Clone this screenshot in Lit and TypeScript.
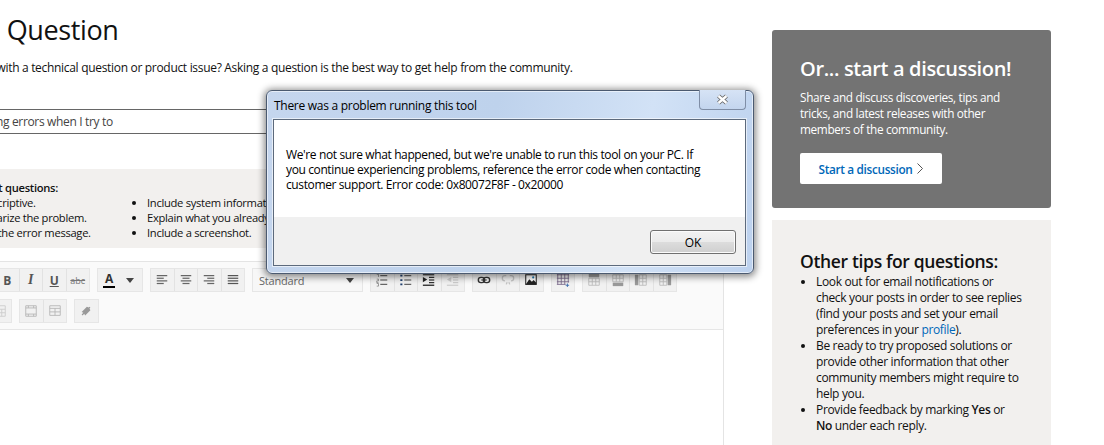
import { LitElement, html, css, svg, nothing } from 'lit';
import { customElement } from 'lit/decorators.js';

// toolbar glyphs, all on a 16x16 box
const lines = (rows: [number, number, number][], color = '#444') =>
  rows.map(([y, x1, x2]) => svg`<path d="M${x1} ${y}H${x2}" stroke=${color} stroke-width="1.4" />`);

const icons: Record<string, unknown> = {
  left: lines([[3, 2, 14], [6, 2, 10], [9, 2, 14], [12, 2, 10]], '#666'),
  center: lines([[3, 2, 14], [6, 4, 12], [9, 2, 14], [12, 4, 12]], '#666'),
  right: lines([[3, 2, 14], [6, 6, 14], [9, 2, 14], [12, 6, 14]], '#666'),
  justify: lines([[3, 2, 14], [6, 2, 14], [9, 2, 14], [12, 2, 14]], '#555'),
  ol: svg`${lines([[3, 6, 14], [8, 6, 14], [13, 6, 14]], '#666')}<path d="M2 1.500h2v3M2 7h2v2H2v2h2M2 12h2v3H2" fill="none" stroke="#777" stroke-width=".8" />`,
  ul: svg`${lines([[3, 6, 14], [8, 6, 14], [13, 6, 14]], '#666')}<path d="M1.500 2h2.400v2H1.500zM1.500 7h2.400v2H1.500zM1.500 12h2.400v2H1.500z" fill="#1f3f6e" />`,
  indent: svg`${lines([[2, 1, 14], [5, 8, 14], [8, 8, 14], [11, 8, 14]], '#333')}<path d="M1 4.500 6 7.500 1 10.500z" fill="#222" /><path d="M1 14H14" stroke="#333" stroke-width="1.600" />`,
  outdent: svg`${lines([[2, 1, 14], [5, 8, 14], [8, 8, 14], [11, 8, 14], [14, 1, 14]], '#ccc')}<path d="M6 4.500 1 7.500 6 10.500z" fill="#ccc" />`,
  link: svg`<rect x="1.500" y="5" width="7" height="6" rx="3" fill="none" stroke="#333" stroke-width="1.600" /><rect x="7.500" y="5" width="7" height="6" rx="3" fill="none" stroke="#333" stroke-width="1.600" /><path d="M5 8h6" stroke="#333" stroke-width="1.400" />`,
  unlink: svg`<path d="M6 3H4.500a3 3 0 0 0 0 6M10 3h1.500a3 3 0 0 1 0 6M6 13l1-2.500M10 13 9 10.500" fill="none" stroke="#c4c4c4" stroke-width="1.500" />`,
  image: svg`<rect x="2" y="2" width="12" height="11" fill="#fff" stroke="#222" stroke-width="1.200" /><path d="M2 13 6 7l3 3 2-2 3 3v2z" fill="#222" /><circle cx="10.500" cy="5" r="1.200" fill="#27a" />`,
  tableAdd: svg`<path d="M2 1v12M6 1v12M10 1v12M14 1v10M1 2h14M1 6h14M1 10h14M1 13h10" stroke="#7a6a8c" fill="none" /><path d="M13 12v4M11 14h4" stroke="#36a" />`,
  rowAbove: svg`<path d="M2 1h12v4H2z" fill="#999" /><path d="M2 6h12v8H2zM2 10h12M6 6v8M10 6v8" fill="none" stroke="#bbb" />`,
  rowBelow: svg`<path d="M2 11h12v4H2z" fill="#999" /><path d="M2 2h12v8H2zM2 6h12M6 2v8M10 2v8" fill="none" stroke="#bbb" />`,
  colLeft: svg`<path d="M1 2h4v12H1z" fill="#999" /><path d="M6 2h8v12H6zM10 2v12M6 6h8M6 10h8" fill="none" stroke="#bbb" />`,
  colRight: svg`<path d="M11 2h4v12h-4z" fill="#999" /><path d="M2 2h8v12H2zM6 2v12M2 6h8M2 10h8" fill="none" stroke="#bbb" />`,
  cells: svg`<path d="M2 2h12v12H2zM2 6h12M2 10h12M6 2v12M10 6v8" fill="none" stroke="#ccc" />`,
  merge: svg`<path d="M2 2h12v12H2zM2 4.500h12M2 11.500h12M5 2v2.500M11 2v2.500M5 11.500V14M11 11.500V14" fill="none" stroke="#b5b5b5" />`,
  split: svg`<path d="M2 2h12v11H2zM2 5h12M2 9h12M8 5v8" fill="none" stroke="#b5b5b5" />`,
  eraser: svg`<path d="M3 9 9 3l2 1 1-1 1 1-1 1 1 2-6 6-1-2-2 2-1-1 2-2z" fill="#999" />`,
};

type Btn = { label?: string; cls?: string; icon?: string };
const row1: Btn[][] = [
  [
    { label: 'B', cls: 'b' },
    { label: 'I', cls: 'i' },
    { label: 'U', cls: 'u' },
    { label: 'abc', cls: 'abc' },
  ],
];
const row1b: Btn[][] = [
  [{ icon: 'ol' }, { icon: 'ul' }, { icon: 'indent' }, { icon: 'outdent' }],
  [{ icon: 'link' }, { icon: 'unlink' }, { icon: 'image' }],
  [{ icon: 'tableAdd' }],
  [{ icon: 'rowAbove' }, { icon: 'rowBelow' }, { icon: 'colLeft' }, { icon: 'colRight' }],
];
const aligns: Btn[] = [{ icon: 'left' }, { icon: 'center' }, { icon: 'right' }, { icon: 'justify' }];
const row2: Btn[][] = [[{ icon: 'cells' }], [{ icon: 'merge' }, { icon: 'split' }], [{ icon: 'eraser' }]];

@customElement('app-root')
export class AppRoot extends LitElement {
  static styles = css`
    :host {
      display: flex;
      width: 1104px;
      height: 445px;
      overflow: hidden;
      position: relative;
      background: #fff;
      color: #111;
      font-family: 'Open Sans', 'Noto Sans', sans-serif;
      font-size: 12px;
      letter-spacing: -0.34px;
    }
    .main {
      flex: none;
      width: 804px;
      margin-left: -80px;
      height: 445px;
    }
    h1 {
      margin: 13px 0 0 0;
      font-size: 27px;
      font-weight: 400;
      line-height: 34px;
      letter-spacing: -0.4px;
      word-spacing: 5px;
      padding-left: 6px;
    }
    .intro {
      margin: 13px 0 0 19px;
      line-height: 16px;
      letter-spacing: -0.31px;
    }
    .input {
      margin: 33px 0 0 0;
      height: 23px;
      border-top: 1px solid #666;
      border-bottom: 1px solid #666;
      padding-left: 34px;
      line-height: 23px;
      color: #444;
    }
    .tips {
      margin-top: 35px;
      height: 79px;
      background: #f2f0ee;
      padding-top: 11px;
      box-sizing: border-box;
      font-size: 11.200px;
      letter-spacing: -0.3px;
      line-height: 15px;
      display: grid;
      grid-template-columns: 215px 1fr;
      align-content: start;
    }
    .tips b {
      grid-column: 1 / 3;
      font-weight: 600;
    }
    .tips ul {
      margin: 0;
      padding: 0 0 0 44px;
    }
    .tips ul + ul {
      padding-left: 12px;
    }
    .editor {
      margin-top: 13px;
      height: 185px;
      border-top: 1px solid #e4e4e4;
      border-right: 1px solid #e4e4e4;
      box-sizing: border-box;
    }
    .toolbar {
      height: 68px;
      padding-top: 6px;
      box-sizing: border-box;
      background: #fafafa;
      border-bottom: 1px solid #e6e6e6;
      display: flex;
      flex-direction: column;
      gap: 7px;
    }
    .row {
      display: flex;
      gap: 7px;
      height: 24px;
      flex: none;
    }
    .row.first {
      padding-left: 75px;
    }
    .row.second {
      padding-left: 67.500px;
    }
    .group {
      flex: none;
      display: flex;
      border: 1px solid #e6e6e6;
      background: #f1f1f1;
      box-sizing: border-box;
    }
    .btn {
      width: 22.500px;
      height: 22px;
      flex: none;
      display: flex;
      align-items: center;
      justify-content: center;
      border-left: 1px solid #e2e2e2;
      color: #555;
      font-weight: 700;
      font-size: 12px;
      letter-spacing: 0;
      box-sizing: content-box;
    }
    .btn:first-child {
      border-left: 0;
    }
    .btn svg {
      width: 14px;
      height: 14px;
    }
    .btn.i {
      font-style: italic;
      font-family: 'Liberation Serif', serif;
      font-size: 14px;
    }
    .btn.u {
      text-decoration: underline;
    }
    .btn.abc {
      text-decoration: line-through;
      font-weight: 400;
      font-size: 9px;
      color: #777;
    }
    .color {
      width: 44px;
      height: 22px;
      display: flex;
      align-items: center;
      gap: 11px;
      padding-left: 5px;
      box-sizing: border-box;
    }
    .color span {
      font-weight: 700;
      font-size: 12px;
      line-height: 14px;
      border-bottom: 2px solid #000;
      padding: 0 2px;
      color: #333;
      letter-spacing: 0;
    }
    .color i,
    .select i {
      width: 0;
      height: 0;
      border: 4px solid transparent;
      border-top: 5px solid #444;
      border-bottom: 0;
    }
    .select {
      flex: none;
      width: 111px;
      height: 24px;
      border: 1px solid #e6e6e6;
      background: #f7f7f7;
      box-sizing: border-box;
      display: flex;
      align-items: center;
      justify-content: space-between;
      padding: 0 8px 0 6px;
      color: #666;
      font-size: 11px;
      letter-spacing: -0.2px;
    }
    .side {
      flex: none;
      width: 279px;
      margin-left: 48px;
    }
    .discuss {
      margin-top: 30px;
      height: 178px;
      box-sizing: border-box;
      background: #737373;
      border-radius: 3px;
      color: #fff;
      padding: 26px 28px 0;
    }
    h2 {
      margin: 0;
      font-weight: 600;
      font-size: 20px;
      line-height: 26px;
      letter-spacing: -0.34px;
    }
    .discuss p {
      margin: 7px 0 0;
      font-size: 11.800px;
      line-height: 16px;
    }
    .discuss a {
      margin-top: 16px;
      width: 142px;
      height: 31px;
      background: #fff;
      border-radius: 2px;
      display: flex;
      align-items: center;
      justify-content: center;
      gap: 5px;
      color: #0067b8;
      font-weight: 600;
      font-size: 11.800px;
    }
    .other {
      margin-top: 12px;
      height: 240px;
      background: #f2f0ee;
      padding: 29px 29px 0 28px;
      box-sizing: border-box;
      line-height: 16px;
    }
    h3 {
      margin: 0;
      font-size: 17.500px;
      font-weight: 600;
      line-height: 25px;
      letter-spacing: -0.34px;
    }
    .other ul {
      margin: 0;
      padding-left: 16px;
    }
    .other a {
      color: #0067b8;
    }
    .other b {
      font-weight: 600;
    }
    .dialog {
      position: absolute;
      left: 266px;
      top: 90px;
      width: 488px;
      height: 184px;
      box-sizing: border-box;
      border: 1px solid #4b5a70;
      border-radius: 6px;
      background: linear-gradient(100deg, #c5d6ee 0%, #bed2ec 45%, #d2e2f6 75%, #bcd1ee 100%);
      box-shadow: 0 1px 7px 2px rgba(0, 0, 0, 0.45), inset 0 0 0 1px rgba(255, 255, 255, 0.55);
      display: flex;
      flex-direction: column;
      padding: 0 7px 7px 6px;
    }
    .titlebar {
      height: 28px;
      flex: none;
      line-height: 29px;
      padding-left: 1px;
      font-size: 12px;
      letter-spacing: -0.28px;
      color: #000;
      position: relative;
    }
    .close {
      position: absolute;
      right: 0;
      top: -1px;
      width: 47px;
      height: 20px;
      box-sizing: border-box;
      border: 1px solid #7f8ea6;
      border-top: 0;
      border-radius: 0 0 4px 4px;
      background: linear-gradient(#d6e3f5, #c3d5ee);
      display: flex;
      align-items: center;
      justify-content: center;
    }
    .close svg {
      width: 13px;
      height: 11px;
    }
    .panel {
      flex: 1;
      border: 1px solid #5d6a7c;
      background: #f0f0f0;
      display: flex;
      flex-direction: column;
      box-shadow: 0 0 0 1px rgba(255, 255, 255, 0.6);
    }
    .msg {
      height: 97px;
      flex: none;
      background: #fff;
      padding: 27px 36px 0 12px;
      box-sizing: border-box;
      font-size: 12px;
      letter-spacing: -0.38px;
      line-height: 15px;
      color: #000;
    }
    .buttons {
      flex: 1;
      display: flex;
      justify-content: flex-end;
      align-items: flex-start;
      padding: 13px 9px 0 0;
    }
    .ok {
      width: 86px;
      height: 24px;
      box-sizing: border-box;
      border: 1px solid #707070;
      border-radius: 3px;
      background: linear-gradient(#f2f2f2 0%, #ebebeb 48%, #dcdcdc 52%, #cfcfcf 100%);
      box-shadow: inset 0 0 0 1px #fbfbfb;
      display: flex;
      align-items: center;
      justify-content: center;
      color: #000;
      letter-spacing: 0;
      font-size: 12px;
    }
  `;

  private renderGroups(groups: Btn[][]) {
    return groups.map((g) => html`<div class="group">${g.map((b) => this.renderBtn(b))}</div>`);
  }

  private renderBtn(b: Btn) {
    return html`<div class="btn ${b.cls ?? ''}">
      ${b.icon ? html`<svg viewBox="0 0 16 16">${icons[b.icon]}</svg>` : (b.label ?? nothing)}
    </div>`;
  }

  render() {
    return html`
      <div class="main">
        <h1>Ask a Question</h1>
        <p class="intro">Need help with a technical question or product issue? Asking a question is the best way to get help from the community.</p>
        <div class="input">I'm getting errors when I try to</div>
        <div class="tips">
          <b>Tips for the best questions:</b>
          <ul>
            <li>Be descriptive.</li>
            <li>Summarize the problem.</li>
            <li>Quote the error message.</li>
          </ul>
          <ul>
            <li>Include system information.</li>
            <li>Explain what you already tried.</li>
            <li>Include a screenshot.</li>
          </ul>
        </div>
        <div class="editor">
          <div class="toolbar">
            <div class="row first">
              ${this.renderGroups(row1)}
              <div class="group"><div class="color"><span>A</span><i></i></div></div>
              <div class="group">${aligns.map((b) => this.renderBtn(b))}</div>
              <div class="select">Standard<i></i></div>
              ${this.renderGroups(row1b)}
            </div>
            <div class="row second">${this.renderGroups(row2)}</div>
          </div>
        </div>
      </div>
      <div class="side">
        <div class="discuss">
          <h2>Or... start a discussion!</h2>
          <p>Share and discuss discoveries, tips and tricks, and latest releases with other members of the community.</p>
          <a>Start a discussion
            <svg width="6" height="11" viewBox="0 0 6 11"><path d="M.5.5 5.500 5.500.5 10.500" fill="none" stroke="#555" /></svg>
          </a>
        </div>
        <div class="other">
          <h3>Other tips for questions:</h3>
          <ul>
            <li>Look out for email notifications or check your posts in order to see replies (find your posts and set your email preferences in your <a>profile</a>).</li>
            <li>Be ready to try proposed solutions or provide other information that other community members might require to help you.</li>
            <li>Provide feedback by marking <b>Yes</b> or <b>No</b> under each reply.</li>
          </ul>
        </div>
      </div>
      <div class="dialog">
        <div class="titlebar">
          There was a problem running this tool
          <div class="close">
            <svg viewBox="0 0 13 11"><path d="M2.500 2 10.500 9M10.500 2 2.500 9" stroke="#666" stroke-width="4.200" /><path d="M2.500 2 10.500 9M10.500 2 2.500 9" stroke="#fff" stroke-width="2.400" /></svg>
          </div>
        </div>
        <div class="panel">
          <div class="msg">We're not sure what happened, but we're unable to run this tool on your PC. If you continue experiencing problems, reference the error code when contacting customer support. Error code: 0x80072F8F - 0x20000</div>
          <div class="buttons"><div class="ok">OK</div></div>
        </div>
      </div>
    `;
  }
}
